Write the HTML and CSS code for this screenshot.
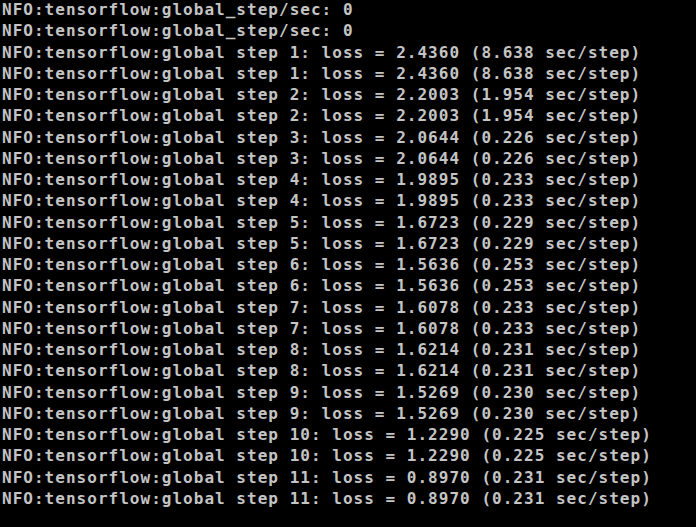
FILE: index.html
```html
<!DOCTYPE html>
<html>
<head>
<meta charset="utf-8">
<link rel="stylesheet" href="styles.css">
</head>
<body>
<pre class="console">NFO:tensorflow:global_step/sec: 0
NFO:tensorflow:global_step/sec: 0
NFO:tensorflow:global step 1: loss = 2.4360 (8.638 sec/step)
NFO:tensorflow:global step 1: loss = 2.4360 (8.638 sec/step)
NFO:tensorflow:global step 2: loss = 2.2003 (1.954 sec/step)
NFO:tensorflow:global step 2: loss = 2.2003 (1.954 sec/step)
NFO:tensorflow:global step 3: loss = 2.0644 (0.226 sec/step)
NFO:tensorflow:global step 3: loss = 2.0644 (0.226 sec/step)
NFO:tensorflow:global step 4: loss = 1.9895 (0.233 sec/step)
NFO:tensorflow:global step 4: loss = 1.9895 (0.233 sec/step)
NFO:tensorflow:global step 5: loss = 1.6723 (0.229 sec/step)
NFO:tensorflow:global step 5: loss = 1.6723 (0.229 sec/step)
NFO:tensorflow:global step 6: loss = 1.5636 (0.253 sec/step)
NFO:tensorflow:global step 6: loss = 1.5636 (0.253 sec/step)
NFO:tensorflow:global step 7: loss = 1.6078 (0.233 sec/step)
NFO:tensorflow:global step 7: loss = 1.6078 (0.233 sec/step)
NFO:tensorflow:global step 8: loss = 1.6214 (0.231 sec/step)
NFO:tensorflow:global step 8: loss = 1.6214 (0.231 sec/step)
NFO:tensorflow:global step 9: loss = 1.5269 (0.230 sec/step)
NFO:tensorflow:global step 9: loss = 1.5269 (0.230 sec/step)
NFO:tensorflow:global step 10: loss = 1.2290 (0.225 sec/step)
NFO:tensorflow:global step 10: loss = 1.2290 (0.225 sec/step)
NFO:tensorflow:global step 11: loss = 0.8970 (0.231 sec/step)
NFO:tensorflow:global step 11: loss = 0.8970 (0.231 sec/step)</pre>
</body>
</html>
```

FILE: styles.css
```css
html, body {
  margin: 0;
  padding: 0;
  background: #000;
  height: 100%;
  overflow: hidden;
}
.console {
  margin: 0;
  padding: 0 0 0 2px;
  transform: translateY(-1px);
  font-family: "DejaVu Sans Mono", monospace;
  font-size: 16px;
  font-weight: bold;
  letter-spacing: 1.02px;
  line-height: 21.25px;
  color: #c4c4c4;
  white-space: pre;
}
```
